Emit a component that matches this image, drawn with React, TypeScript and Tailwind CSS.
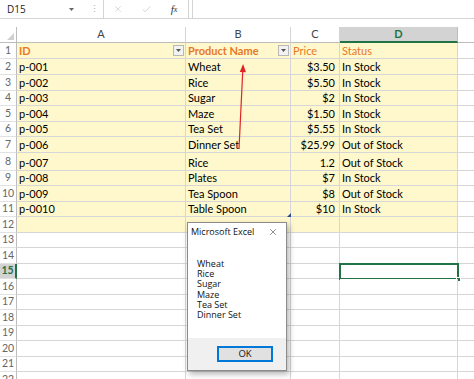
import React from "react";
import { X, Check } from "lucide-react";

type Row = {
  n: number;
  h: string;
  a?: string;
  b?: string;
  c?: string;
  d?: string;
  fill?: boolean;
};

const rows: Row[] = [
  { n: 1, h: "h-[16px]", a: "ID", b: "Product Name", c: "Price", d: "Status", fill: true },
  { n: 2, h: "h-[16px]", a: "p-001", b: "Wheat", c: "$3.50", d: "In Stock", fill: true },
  { n: 3, h: "h-[16px]", a: "p-002", b: "Rice", c: "$5.50", d: "In Stock", fill: true },
  { n: 4, h: "h-[15px]", a: "p-003", b: "Sugar", c: "$2", d: "In Stock", fill: true },
  { n: 5, h: "h-[16px]", a: "p-004", b: "Maze", c: "$1.50", d: "In Stock", fill: true },
  { n: 6, h: "h-[15px]", a: "p-005", b: "Tea Set", c: "$5.55", d: "In Stock", fill: true },
  { n: 7, h: "h-[16px]", a: "p-006", b: "Dinner Set", c: "$25.99", d: "Out of Stock", fill: true },
  { n: 8, h: "h-[18px]", a: "p-007", b: "Rice", c: "1.2", d: "Out of Stock", fill: true },
  { n: 9, h: "h-[15px]", a: "p-008", b: "Plates", c: "$7", d: "In Stock", fill: true },
  { n: 10, h: "h-[16px]", a: "p-009", b: "Tea Spoon", c: "$8", d: "Out of Stock", fill: true },
  { n: 11, h: "h-[15px]", a: "p-0010", b: "Table Spoon", c: "$10", d: "In Stock", fill: true },
  { n: 12, h: "h-[16px]", fill: true },
  { n: 13, h: "h-[15px]" },
  { n: 14, h: "h-[16px]" },
  { n: 15, h: "h-[15px]" },
  { n: 16, h: "h-[16px]" },
  { n: 17, h: "h-[15px]" },
  { n: 18, h: "h-[16px]" },
  { n: 19, h: "h-[15px]" },
  { n: 20, h: "h-[16px]" },
  { n: 21, h: "h-[15px]" },
  { n: 22, h: "h-[16px]" },
];

const FilterBtn = () => (
  <div className="absolute right-[1px] bottom-[2px] w-[11px] h-[11px] border border-[#b8b8b8] bg-[#f2f2f2] flex items-center justify-center">
    <svg width="5" height="3" viewBox="0 0 5 3">
      <path d="M0 0 L5 0 L2.5 3 Z" fill="#555" />
    </svg>
  </div>
);

const FormulaBar = () => (
  <div className="h-[19px] flex border-b border-[#d4d4d4] font-['Open_Sans',sans-serif] text-[10px] text-[#222]">
    <div className="w-[86px] flex items-center pl-[7px] relative">
      D15
      <svg className="absolute left-[69px] top-[8px]" width="5" height="3" viewBox="0 0 5 3">
        <path d="M0 0 L5 0 L2.5 3 Z" fill="#666" />
      </svg>
    </div>
    <div className="w-[17px] flex items-center justify-center text-[#aaa] text-[9px]">⋮</div>
    <div className="w-[86px] flex items-center border-l border-r border-[#d4d4d4]">
      <div className="w-[28px] flex justify-center">
        <X size={10} strokeWidth={1.2} color="#b5b5b5" />
      </div>
      <div className="w-[28px] flex justify-center">
        <Check size={11} strokeWidth={1.2} color="#b5b5b5" />
      </div>
      <div className="w-[28px] flex justify-center italic font-['Liberation_Serif',serif] text-[11px] text-[#333]">
        f<span className="text-[8px] mt-[3px]">x</span>
      </div>
    </div>
    <div className="w-[3px]" />
    <div className="flex-1 border-l border-[#d4d4d4]" />
  </div>
);

const HeaderRow = () => (
  <div className="flex h-[16px] text-[11px] text-[#444]">
    <div className="w-[17px] shrink-0 border-r border-b border-[#bdbdbd] relative">
      <svg className="absolute right-[2px] bottom-[2px]" width="7" height="7" viewBox="0 0 7 7">
        <path d="M7 0 L7 7 L0 7 Z" fill="#d0d0d0" />
      </svg>
    </div>
    <div className="w-[169px] shrink-0 border-r border-b border-[#d4d4d4] border-b-[#bdbdbd] flex items-center justify-center">A</div>
    <div className="w-[105px] shrink-0 border-r border-b border-[#d4d4d4] border-b-[#bdbdbd] flex items-center justify-center">B</div>
    <div className="w-[49px] shrink-0 border-r border-b border-[#d4d4d4] border-b-[#bdbdbd] flex items-center justify-center">C</div>
    <div className="w-[118px] shrink-0 border-r border-[#bdbdbd] border-b-2 border-b-[#217346] bg-[#d3d3d3] flex items-center justify-center font-bold text-[#217346]">
      D
    </div>
    <div className="flex-1 border-b border-[#bdbdbd]" />
  </div>
);

const SheetRow = ({ r }: { r: Row }) => {
  const sel = r.n === 15;
  const fill = r.fill ? "bg-[#fff8cc]" : "bg-white";
  const head = r.n === 1;
  const cell = `shrink-0 border-r border-b border-[#d6d6d6] flex items-end leading-[14px] whitespace-nowrap overflow-hidden ${fill}`;
  return (
    <div className={`flex ${r.h}`}>
      <div
        className={`w-[17px] shrink-0 border-b border-[#e1e1e1] flex items-center justify-center text-[10.5px] ${
          sel
            ? "bg-[#d3d3d3] text-[#217346] font-bold border-r-2 border-r-[#217346]"
            : "text-[#666] border-r border-r-[#bdbdbd]"
        }`}
      >
        {r.n}
      </div>
      <div className={`w-[169px] pl-[2px] relative ${cell} ${head ? "font-bold text-[#e9781f]" : ""}`}>
        {r.a}
        {head && <FilterBtn />}
      </div>
      <div className={`w-[105px] pl-[2px] relative overflow-visible ${cell} ${head ? "font-bold text-[#e9781f]" : ""}`}>
        {r.b}
        {head && <FilterBtn />}
        {r.n === 11 && (
          <svg className="absolute right-[-1px] bottom-[-1px]" width="4" height="4" viewBox="0 0 4 4">
            <path d="M4 0 L4 4 L0 4 Z" fill="#2b4a8a" />
          </svg>
        )}
      </div>
      <div className={`w-[49px] pr-[4px] justify-end ${cell} ${head ? "justify-start pl-[2px] text-[#e9781f]" : ""}`}>
        {r.c}
      </div>
      <div className={`w-[118px] pl-[2px] relative overflow-visible ${cell} ${head ? "text-[#e9781f]" : ""}`}>
        {r.d}
        {sel && (
          <>
            <div className="absolute top-[-1px] left-[-1px] right-[-2px] bottom-[-2px] border-2 border-[#217346]" />
            <div className="absolute right-[-4px] bottom-[-4px] w-[5px] h-[5px] bg-[#217346] border border-white" />
          </>
        )}
      </div>
      <div className="flex-1 border-b border-[#d6d6d6]" />
    </div>
  );
};

const Arrow = () => (
  <svg className="absolute left-[230px] top-[55px]" width="20" height="100" viewBox="0 0 20 100">
    <line x1="9" y1="94" x2="12.8" y2="15" stroke="#e02424" strokeWidth="1.2" />
    <path d="M13.1 9 L9.8 17 L16 17.3 Z" fill="#e02424" />
  </svg>
);

const Dialog = () => (
  <div className="absolute left-[187px] top-[222px] w-[100px] h-[149px] bg-white border border-[#8c8c8c] shadow-[2px_3px_6px_rgba(0,0,0,0.3)] flex flex-col font-['Open_Sans',sans-serif] text-[#111]">
    <div className="h-[17px] flex items-center justify-between pl-[3px] pr-[8px] text-[9px]">
      <span>Microsoft Excel</span>
      <X size={10} strokeWidth={1.2} color="#222" />
    </div>
    <div className="flex-1 pl-[9px] pt-[19px] text-[9px] leading-[10.2px]">
      <div>Wheat</div>
      <div>Rice</div>
      <div>Sugar</div>
      <div>Maze</div>
      <div>Tea Set</div>
      <div>Dinner Set</div>
    </div>
    <div className="h-[32px] bg-[#f0f0f0] flex justify-end pt-[8px] pr-[13px]">
      <div className="w-[56px] h-[16px] bg-[#e1e1e1] border-2 border-[#0078d7] flex items-center justify-center text-[9.5px]">
        OK
      </div>
    </div>
  </div>
);

export default function App() {
  return (
    <div className="relative w-[474px] h-[379px] overflow-hidden bg-white font-['Lato',sans-serif] text-[11px] text-black">
      <FormulaBar />
      <div className="h-[8px]" />
      <HeaderRow />
      {rows.map((r) => (
        <SheetRow key={r.n} r={r} />
      ))}
      <Arrow />
      <Dialog />
    </div>
  );
}
